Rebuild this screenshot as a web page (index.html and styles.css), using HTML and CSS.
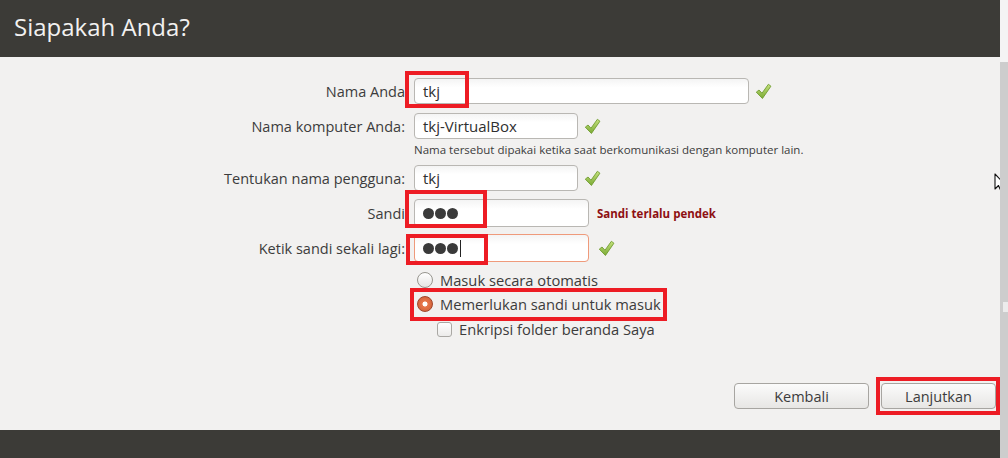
FILE: index.html
```html
<!DOCTYPE html>
<html lang="id">
<head>
<meta charset="utf-8">
<title>Siapakah Anda?</title>
<link rel="stylesheet" href="styles.css">
</head>
<body>
<div class="window">
  <div class="main">
    <header class="titlebar"><h1 class="title">Siapakah Anda?</h1></header>
    <section class="content">
      <form class="form">
        <div class="row row-name">
          <span class="lbl">Nama Anda</span>
          <span class="field w-long"><span class="val">tkj</span></span>
          <svg class="check" viewBox="0 0 16 16"><use href="#chk"/></svg>
        </div>
        <div class="row row-comp">
          <span class="lbl">Nama komputer Anda:</span>
          <span class="field w-mid"><span class="val">tkj-VirtualBox</span></span>
          <svg class="check" viewBox="0 0 16 16"><use href="#chk"/></svg>
        </div>
        <p class="hint">Nama tersebut dipakai ketika saat berkomunikasi dengan komputer lain.</p>
        <div class="row row-user">
          <span class="lbl">Tentukan nama pengguna:</span>
          <span class="field w-mid"><span class="val">tkj</span></span>
          <svg class="check" viewBox="0 0 16 16"><use href="#chk"/></svg>
        </div>
        <div class="row row-pass">
          <span class="lbl">Sandi</span>
          <span class="field w-pass"><span class="dots" aria-label="●●●"><i></i><i></i><i></i></span></span>
          <span class="error">Sandi terlalu pendek</span>
        </div>
        <div class="row row-pass2">
          <span class="lbl">Ketik sandi sekali lagi:</span>
          <span class="field w-pass warn"><span class="dots" aria-label="●●●"><i></i><i></i><i></i></span><span class="caret"></span></span>
          <svg class="check" viewBox="0 0 16 16"><use href="#chk"/></svg>
        </div>
        <div class="opt opt-auto"><span class="radio"></span><span class="opt-text">Masuk secara otomatis</span></div>
        <div class="opt opt-pw"><span class="radio on"></span><span class="opt-text">Memerlukan sandi untuk masuk</span></div>
        <div class="opt opt-enc"><span class="cbox"></span><span class="opt-text">Enkripsi folder beranda Saya</span></div>
      </form>
      <div class="buttons">
        <button type="button" class="btn btn-back">Kembali</button>
        <button type="button" class="btn btn-next">Lanjutkan</button>
      </div>
    </section>
    <footer class="bottombar"></footer>
  </div>
  <div class="scrollbar">
    <div class="sb-top"></div>
    <div class="sb-track"><div class="sb-thumb"></div></div>
  </div>
</div>

<div class="mark m1"></div>
<div class="mark m2"></div>
<div class="mark m3"></div>
<div class="mark m4"></div>
<div class="mark m5"></div>

<svg class="cursor" viewBox="0 0 6 19"><path d="M1 1 L1 16 L4.5 12.5 L7 18 L9 17 L6.5 11.5 L11 11.5 Z" fill="#fff" stroke="#111" stroke-width="1.1" stroke-linejoin="round"/></svg>

<svg width="0" height="0" class="defs">
  <defs>
    <linearGradient id="gchk" x1="0" y1="0" x2="0" y2="1">
      <stop offset="0" stop-color="#c6e27e"/>
      <stop offset="1" stop-color="#7aaa34"/>
    </linearGradient>
    <symbol id="chk" viewBox="0 0 16 16">
      <path d="M1.2 8.6 L3.8 6.6 L6.6 9.6 L12.6 1.2 L15 3 L7 14.6 Z" fill="url(#gchk)" stroke="#6d9a2c" stroke-width="0.8" stroke-linejoin="round"/>
    </symbol>
  </defs>
</svg>
</body>
</html>
```

FILE: styles.css
```css
html, body {
  margin: 0;
  padding: 0;
}
body {
  width: 1008px;
  height: 458px;
  overflow: hidden;
  position: relative;
  font-family: "Open Sans", "Noto Sans", sans-serif;
  color: #3c3c3c;
  background: #f2f1f0;
}
.window {
  display: flex;
  width: 1008px;
  height: 458px;
}
.main {
  width: 1000px;
  display: flex;
  flex-direction: column;
}
.titlebar {
  height: 57px;
  background: #3c3b37;
  display: flex;
  align-items: center;
  padding-left: 14px;
  flex: none;
}
.title {
  margin: 0;
  margin-top: -4px;
  font-weight: 400;
  font-size: 24px;
  color: #f2f1f0;
  letter-spacing: 0;
}
.content {
  flex: 1;
  background: #f2f1f0;
  display: flex;
  flex-direction: column;
  justify-content: space-between;
}
.form {
  margin: 0;
  padding-top: 21px;
  display: flex;
  flex-direction: column;
}
.row {
  display: flex;
  align-items: center;
  font-size: 14.5px;
}
.lbl {
  width: 405px;
  text-align: right;
  flex: none;
  color: #3c3c3c;
}
.field {
  margin-left: 9px;
  height: 26px;
  box-sizing: border-box;
  border: 1px solid #b9b7b3;
  border-radius: 4px;
  background: linear-gradient(#f4f4f4, #ffffff 35%);
  display: flex;
  align-items: center;
  padding-left: 8px;
  flex: none;
  color: #2f2f2f;
}
.val {
  font-size: 15px;
}
.w-long { width: 335px; }
.w-mid { width: 164px; }
.w-pass { width: 175px; height: 28px; }
.warn { border-color: #ef9a7b; }
.dots {
  display: flex;
  gap: 1px;
}
.dots i {
  display: block;
  width: 11px;
  height: 11px;
  border-radius: 50%;
  background: #3a3a3a;
}
.caret {
  width: 1px;
  height: 17px;
  background: #222;
  margin-left: 2px;
}
.check {
  width: 17px;
  height: 17px;
  margin-left: 6px;
  flex: none;
}
.row-comp { margin-top: 9px; }
.hint {
  margin: 3px 0 0 414px;
  font-size: 11.5px;
  color: #3c3c3c;
  line-height: 16px;
}
.row-user { margin-top: 7px; }
.row-pass { margin-top: 8px; }
.row-pass2 { margin-top: 7px; }
.row-pass2 .check { margin-left: 9px; }
.error {
  margin-left: 8px;
  font-size: 11.5px;
  font-weight: 700;
  color: #8e0f12;
}
.opt {
  display: flex;
  align-items: center;
  font-size: 14.7px;
  height: 24px;
}
.opt-auto {
  margin-top: 6px;
  padding-left: 417px;
}
.opt-pw {
  padding-left: 417px;
}
.opt-enc {
  margin-top: 1px;
  padding-left: 437px;
}
.opt-text {
  margin-left: 7px;
  color: #3c3c3c;
}
.radio {
  width: 16px;
  height: 16px;
  box-sizing: border-box;
  border-radius: 50%;
  border: 1px solid #98968f;
  background: linear-gradient(#ffffff, #e6e5e3);
  flex: none;
}
.radio.on {
  border-color: #a0452a;
  background: radial-gradient(circle at 50% 50%, #ffffff 0, #ffffff 2.2px, #e7774c 2.8px, #c95a33 100%);
}
.cbox {
  width: 15px;
  height: 15px;
  box-sizing: border-box;
  border: 1px solid #aaa8a4;
  border-radius: 3px;
  background: linear-gradient(#ffffff, #ecebea);
  flex: none;
}
.buttons {
  display: flex;
  justify-content: flex-end;
  gap: 12px;
  padding-right: 4px;
  padding-bottom: 21px;
}
.btn {
  height: 26px;
  box-sizing: border-box;
  border: 1px solid #a7a5a1;
  border-radius: 4px;
  background: linear-gradient(#fbfbfb, #e7e6e4);
  font-family: "Open Sans", "Noto Sans", sans-serif;
  font-size: 14.5px;
  color: #3c3c3c;
  padding: 0;
}
.btn-back { width: 135px; }
.btn-next { width: 115px; }
.bottombar {
  height: 28px;
  background: #3c3b37;
  flex: none;
}
.scrollbar {
  width: 8px;
  display: flex;
  flex-direction: column;
}
.sb-top {
  height: 62px;
  background: #f4f4f4;
}
.sb-track {
  flex: 1;
  background: #cdcdcd;
  position: relative;
}
.sb-thumb {
  position: absolute;
  left: 3px;
  right: 0;
  top: 240px;
  height: 10px;
  background: #ececec;
}
.mark {
  position: absolute;
  box-sizing: border-box;
  border: 4px solid #ed1c24;
}
.m1 { left: 405px; top: 71px; width: 64px; height: 37px; }
.m2 { left: 405px; top: 190px; width: 82px; height: 38px; }
.m3 { left: 406px; top: 234px; width: 82px; height: 31px; }
.m4 { left: 410px; top: 288px; width: 257px; height: 33px; }
.m5 { left: 876px; top: 377px; width: 124px; height: 38px; }
.cursor {
  position: absolute;
  left: 994px;
  top: 173px;
  width: 6px;
  height: 19px;
}
.defs {
  position: absolute;
}
```
